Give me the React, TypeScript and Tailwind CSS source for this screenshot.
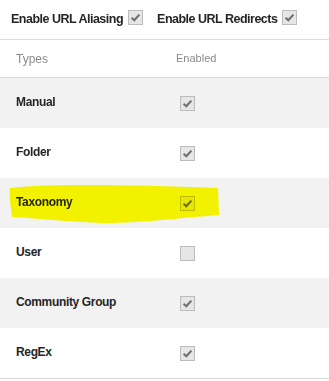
import React from 'react';

type Row = { name: string; enabled: boolean; highlight?: boolean };

const rows: Row[] = [
  { name: 'Manual', enabled: true },
  { name: 'Folder', enabled: true },
  { name: 'Taxonomy', enabled: true, highlight: true },
  { name: 'User', enabled: false },
  { name: 'Community Group', enabled: true },
  { name: 'RegEx', enabled: true },
];

const Check: React.FC<{ checked: boolean }> = ({ checked }) => (
  <span className="inline-flex w-[15px] h-[15px] items-center justify-center border border-[#bcbcbc] bg-[#e6e6e6]">
    {checked && (
      <svg width="11" height="11" viewBox="0 0 11 11">
        <path d="M1.6 5.8 L4.3 8.2 L9.4 2.6" fill="none" stroke="#6e6e6e" strokeWidth="2.1" />
      </svg>
    )}
  </span>
);

const App: React.FC = () => {
  return (
    <div className="w-[329px] h-[381px] bg-white overflow-hidden [font-family:'Liberation_Sans',Arial,sans-serif] text-[#252525]">
      <div className="h-[40px] flex items-center pl-[11px] border-b border-[#dcdcdc] text-[12.5px] font-bold tracking-[-0.5px]">
        <span>Enable URL Aliasing</span>
        <span className="ml-[5px]"><Check checked /></span>
        <span className="ml-[14px]">Enable URL Redirects</span>
        <span className="ml-[5px]"><Check checked /></span>
      </div>
      <div className="h-[38px] flex items-center border-b border-[#dcdcdc] text-[#8a8a8a]">
        <span className="w-[176px] pl-[16px] text-[12px]">Types</span>
        <span className="text-[11px]">Enabled</span>
      </div>
      <div className="border-b border-[#d6d6d6]">
        {rows.map((r, i) => (
          <div
            key={r.name}
            className={`relative h-[50px] flex items-center ${i % 2 === 0 ? 'bg-[#f2f2f2]' : 'bg-white'}`}
          >
            <span className="w-[180px] pl-[16px] pb-[3px] text-[12px] font-bold tracking-[-0.35px]">{r.name}</span>
            <Check checked={r.enabled} />
            {r.highlight && (
              <svg
                className="absolute left-0 top-0 mix-blend-multiply pointer-events-none"
                width="230"
                height="50"
                viewBox="0 0 230 50"
              >
                <path
                  d="M10 10 C40 6 120 6 218 10 L219 37 C180 40 130 46 100 45 C60 43 30 40 12 39 C11 30 9 20 10 10 Z"
                  fill="#ffff00"
                />
              </svg>
            )}
          </div>
        ))}
      </div>
    </div>
  );
};

export default App;
